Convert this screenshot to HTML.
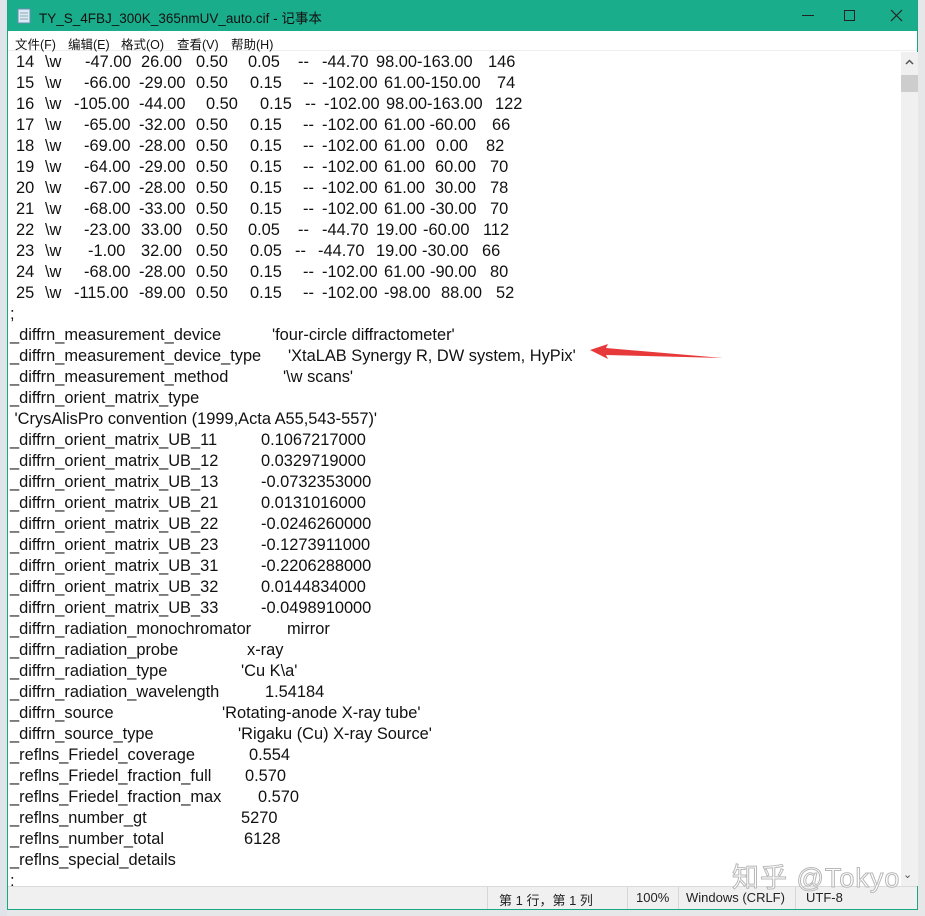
<!DOCTYPE html>
<html><head><meta charset="utf-8"><style>
*{margin:0;padding:0;box-sizing:border-box}
body{width:925px;height:916px;overflow:hidden;background:#e6e7e9;position:relative;font-family:"Liberation Sans","Noto Sans CJK SC",sans-serif}
#win{position:absolute;left:7px;top:0;width:911px;height:910px;background:#fff;border:1px solid #1aa583;border-top:none}
#title{position:absolute;left:0;top:0;width:100%;height:31px;background:#1aad8b;color:#111;font-size:13.5px}
#menu{position:absolute;left:0;top:31px;width:100%;height:20px;background:#fff;font-size:12.5px;color:#111;border-bottom:1px solid #eee}
#menu span{position:absolute;top:3px}
.ln{position:absolute;left:0;height:21px;font-size:16.4px;color:#111;white-space:pre;line-height:21px}
.ln span{position:absolute;top:0}
#sb{position:absolute;left:893px;top:52px;width:17px;height:834px;background:#f0f0f0}
#status{position:absolute;left:0;top:886px;width:100%;height:23px;background:#f0f0f0;border-top:1px solid #dadada;font-size:13px;color:#222}
#status span{position:absolute;top:3px}
.sep{position:absolute;top:0;width:1px;height:22px;background:#d6d6d6}
</style></head><body>
<div style="position:absolute;left:0;top:0;width:7px;height:916px;background:#dfe3ea"></div>
<div id="win">
<div id="title">
<svg style="position:absolute;left:9px;top:8px" width="14" height="16"><rect x="1" y="1" width="12" height="14" fill="#dbe9f5" stroke="#6a8bb0"/><line x1="3" y1="5" x2="11" y2="5" stroke="#8aa"/><line x1="3" y1="8" x2="11" y2="8" stroke="#8aa"/><line x1="3" y1="11" x2="11" y2="11" stroke="#8aa"/></svg>
<span style="position:absolute;left:31px;top:7px">TY_S_4FBJ_300K_365nmUV_auto.cif - 记事本</span>
<div style="position:absolute;left:794px;top:15px;width:12px;height:1px;background:#222"></div>
<div style="position:absolute;left:836px;top:10px;width:11px;height:11px;border:1px solid #222"></div>
<svg style="position:absolute;left:882px;top:9px" width="13" height="13"><path d="M1 1L12 12M12 1L1 12" stroke="#222" stroke-width="1.2"/></svg>
</div>
<div id="menu"><span style="left:7px">文件(F)</span><span style="left:60px">编辑(E)</span><span style="left:113px">格式(O)</span><span style="left:169px">查看(V)</span><span style="left:223px">帮助(H)</span></div>
<div id="txt"></div>
<div id="sb"><svg style="position:absolute;left:4px;top:7px" width="9" height="6"><path d="M1 5L4.5 1.5L8 5" stroke="#555" stroke-width="1.5" fill="none"/></svg><div style="position:absolute;left:0;top:23px;width:17px;height:17px;background:#cdcdcd"></div></div>
<div style="position:absolute;left:895px;top:868px;font-size:11px;color:#555">⌄</div>
<div id="status">
<div class="sep" style="left:479px"></div><div class="sep" style="left:619px"></div><div class="sep" style="left:670px"></div><div class="sep" style="left:787px"></div>
<span style="left:491px">第 1 行，第 1 列</span><span style="left:628px">100%</span><span style="left:678px">Windows (CRLF)</span><span style="left:798px">UTF-8</span>
</div>
</div>
<div style="position:absolute;left:732px;top:856px;font-size:27px;color:#fff;-webkit-text-stroke:1px #b8b8b8;letter-spacing:1px">知乎 @Tokyo</div>
<svg style="position:absolute;left:585px;top:340px" width="145" height="25"><path d="M5 10L23 4L21 8L138 18L21 15L23 19Z" fill="#e8393a"/></svg>
<script>
var rows=[
["14","-47.00@85","26.00@141","0.50@196","0.05@248","--@298","-44.70@322","98.00-163.00@376","146@488"],
["15","-66.00@84","-29.00@139","0.50@196","0.15@250","--@303","-102.00@322","61.00-150.00@384","74@497"],
["16","-105.00@74","-44.00@139","0.50@206","0.15@260","--@305","-102.00@324","98.00-163.00@386","122@495"],
["17","-65.00@84","-32.00@139","0.50@196","0.15@250","--@303","-102.00@322","61.00 -60.00@384","66@492"],
["18","-69.00@84","-28.00@139","0.50@196","0.15@250","--@303","-102.00@322","61.00@384","0.00@436","82@486"],
["19","-64.00@84","-29.00@139","0.50@196","0.15@250","--@303","-102.00@322","61.00@384","60.00@435","70@490"],
["20","-67.00@84","-28.00@139","0.50@196","0.15@250","--@303","-102.00@322","61.00@384","30.00@435","78@490"],
["21","-68.00@84","-33.00@139","0.50@196","0.15@250","--@303","-102.00@322","61.00@384","-30.00@430","70@490"],
["22","-23.00@84","33.00@141","0.50@196","0.05@248","--@298","-44.70@322","19.00@376","-60.00@423","112@483"],
["23","-1.00@88","32.00@141","0.50@196","0.05@250","--@295","-44.70@318","19.00@376","-30.00@422","66@482"],
["24","-68.00@84","-28.00@139","0.50@196","0.15@250","--@303","-102.00@322","61.00@384","-90.00@430","80@490"],
["25","-115.00@74","-89.00@139","0.50@196","0.15@250","--@303","-102.00@322","-98.00@384","88.00@441","52@496"]];
var kv=[[";"],
["_diffrn_measurement_device","'four-circle diffractometer'@272"],
["_diffrn_measurement_device_type","'XtaLAB Synergy R, DW system, HyPix'@288"],
["_diffrn_measurement_method","'\\w scans'@283"],
["_diffrn_orient_matrix_type"],
[" 'CrysAlisPro convention (1999,Acta A55,543-557)'"],
["_diffrn_orient_matrix_UB_11","0.1067217000@261"],
["_diffrn_orient_matrix_UB_12","0.0329719000@261"],
["_diffrn_orient_matrix_UB_13","-0.0732353000@261"],
["_diffrn_orient_matrix_UB_21","0.0131016000@261"],
["_diffrn_orient_matrix_UB_22","-0.0246260000@261"],
["_diffrn_orient_matrix_UB_23","-0.1273911000@261"],
["_diffrn_orient_matrix_UB_31","-0.2206288000@261"],
["_diffrn_orient_matrix_UB_32","0.0144834000@261"],
["_diffrn_orient_matrix_UB_33","-0.0498910000@261"],
["_diffrn_radiation_monochromator","mirror@287"],
["_diffrn_radiation_probe","x-ray@247"],
["_diffrn_radiation_type","'Cu K\\a'@241"],
["_diffrn_radiation_wavelength","1.54184@265"],
["_diffrn_source","'Rotating-anode X-ray tube'@222"],
["_diffrn_source_type","'Rigaku (Cu) X-ray Source'@238"],
["_reflns_Friedel_coverage","0.554@249"],
["_reflns_Friedel_fraction_full","0.570@245"],
["_reflns_Friedel_fraction_max","0.570@258"],
["_reflns_number_gt","5270@241"],
["_reflns_number_total","6128@244"],
["_reflns_special_details"],
[";"]];
var h="",y=52,off=8;
function sp(s,x){return '<span style="left:'+(x-off)+'px">'+s.replace(/&/g,"&amp;").replace(/</g,"&lt;")+'</span>';}
rows.forEach(function(r){var l='<div class="ln" style="top:'+y+'px">'+sp(r[0],16)+sp("\\w",45);
for(var i=1;i<r.length;i++){var p=r[i].split("@");l+=sp(p[0],+p[1]);}h+=l+'</div>';y+=21;});
kv.forEach(function(r){var l='<div class="ln" style="top:'+y+'px">'+sp(r[0],10);
if(r[1]){var i=r[1].lastIndexOf("@");l+=sp(r[1].slice(0,i),+r[1].slice(i+1));}h+=l+'</div>';y+=21;});
document.getElementById("txt").innerHTML=h;
</script>
</body></html>
